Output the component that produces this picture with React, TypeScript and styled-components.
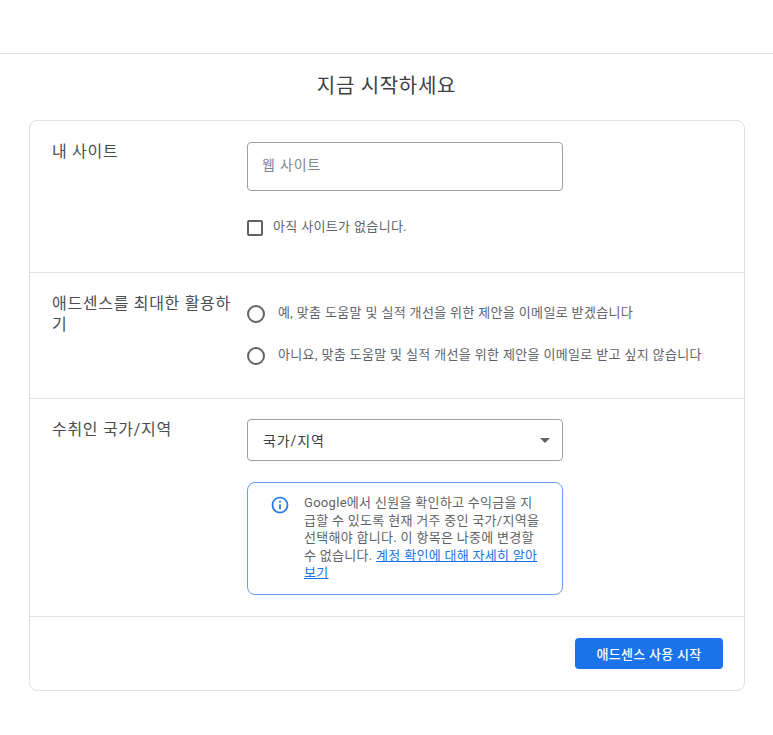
import styled, { createGlobalStyle } from "styled-components";

const GlobalStyle = createGlobalStyle`
  html, body {
    margin: 0;
    padding: 0;
    background: #fff;
  }
  body {
    font-family: Roboto, "Noto Sans CJK KR", sans-serif;
    color: #3c4043;
  }
`;

const App = () => {
  return (
    <>
      <GlobalStyle />
      <Header />
      <Title>지금 시작하세요</Title>
      <Card>
        <Section $height={152}>
          <Label>내 사이트</Label>
          <Fields>
            <TextInput>웹 사이트</TextInput>
            <CheckRow>
              <CheckBox />
              <SmallText>아직 사이트가 없습니다.</SmallText>
            </CheckRow>
          </Fields>
        </Section>
        <Section $height={126}>
          <Label>애드센스를 최대한 활용하기</Label>
          <RadioFields>
            <RadioRow>
              <Radio />
              <SmallText>예, 맞춤 도움말 및 실적 개선을 위한 제안을 이메일로 받겠습니다</SmallText>
            </RadioRow>
            <RadioRow>
              <Radio />
              <SmallText>아니요, 맞춤 도움말 및 실적 개선을 위한 제안을 이메일로 받고 싶지 않습니다</SmallText>
            </RadioRow>
          </RadioFields>
        </Section>
        <Section $height={218}>
          <Label>수취인 국가/지역</Label>
          <Fields>
            <SelectBox>
              <span>국가/지역</span>
              <Arrow />
            </SelectBox>
            <Notice>
              <InfoIcon viewBox="0 0 24 24" aria-hidden="true">
                <path
                  fill="#1a73e8"
                  d="M11 7h2v2h-2zm0 4h2v6h-2zm1-9C6.48 2 2 6.48 2 12s4.48 10 10 10 10-4.48 10-10S17.52 2 12 2zm0 18c-4.41 0-8-3.59-8-8s3.59-8 8-8 8 3.59 8 8-3.59 8-8 8z"
                />
              </InfoIcon>
              <NoticeText>
                Google에서 신원을 확인하고 수익금을 지급할 수 있도록 현재 거주 중인 국가/지역을 선택해야 합니다. 이 항목은 나중에 변경할 수 없습니다.{" "}
                <a href="#verify">계정 확인에 대해 자세히 알아보기</a>
              </NoticeText>
            </Notice>
          </Fields>
        </Section>
        <Footer>
          <StartButton>애드센스 사용 시작</StartButton>
        </Footer>
      </Card>
    </>
  );
};

const Header = styled.div`
  height: 53px;
  border-bottom: 1px solid #e0e0e0;
`;

const Title = styled.h1`
  margin: 0;
  height: 66px;
  line-height: 64px;
  text-align: center;
  font-size: 20px;
  font-weight: 400;
  letter-spacing: 0.7px;
  color: #3c4043;
`;

const Card = styled.div`
  width: 716px;
  box-sizing: border-box;
  margin-left: 29px;
  border: 1px solid #e0e0e0;
  border-radius: 8px;
`;

const Section = styled.div<{ $height: number }>`
  height: ${(p) => p.$height}px;
  box-sizing: border-box;
  display: grid;
  grid-template-columns: 195px 1fr;
  padding: 20px 22px 0;
  border-bottom: 1px solid #e0e0e0;
`;

const Label = styled.div`
  font-size: 16px;
  line-height: 21px;
  letter-spacing: 0.7px;
  color: #4a4e51;
  padding-right: 8px;
  word-break: break-all;
`;

const Fields = styled.div`
  display: flex;
  flex-direction: column;
  align-items: flex-start;
`;

const TextInput = styled.div`
  width: 316px;
  height: 49px;
  box-sizing: border-box;
  border: 1px solid #9aa0a6;
  border-radius: 4px;
  padding-left: 14px;
  margin-top: 1px;
  line-height: 45px;
  font-size: 14px;
  letter-spacing: 0.8px;
  color: #80868b;
`;

const CheckRow = styled.div`
  display: flex;
  align-items: center;
  gap: 10px;
  margin-top: 28px;
`;

const CheckBox = styled.div`
  width: 16px;
  height: 16px;
  box-sizing: border-box;
  border: 2px solid #5f6368;
  border-radius: 2px;
`;

const SmallText = styled.span`
  font-size: 13px;
  line-height: 18px;
  letter-spacing: 0.35px;
  color: #5f6368;
  white-space: nowrap;
  position: relative;
  top: -1px;
`;

const RadioFields = styled.div`
  display: flex;
  flex-direction: column;
  gap: 24px;
  padding-top: 12px;
`;

const RadioRow = styled.div`
  display: flex;
  align-items: center;
  gap: 13px;
`;

const Radio = styled.div`
  width: 18px;
  height: 18px;
  box-sizing: border-box;
  border: 2px solid #5f6368;
  border-radius: 50%;
`;

const SelectBox = styled.div`
  width: 316px;
  height: 42px;
  box-sizing: border-box;
  border: 1px solid #9aa0a6;
  border-radius: 4px;
  padding: 0 12px 0 15px;
  display: flex;
  align-items: center;
  justify-content: space-between;
  font-size: 14px;
  letter-spacing: 0.9px;
  color: #3c4043;
`;

const Arrow = styled.div`
  width: 0;
  height: 0;
  border-left: 5px solid transparent;
  border-right: 5px solid transparent;
  border-top: 5px solid #5f6368;
`;

const Notice = styled.div`
  width: 316px;
  box-sizing: border-box;
  margin-top: 21px;
  border: 1px solid #669df6;
  border-radius: 8px;
  padding: 11px 22px 12px 22px;
  display: flex;
  gap: 14px;
`;

const InfoIcon = styled.svg`
  width: 20px;
  height: 20px;
  flex: none;
  margin-top: 1px;
`;

const NoticeText = styled.div`
  font-size: 13px;
  line-height: 17.5px;
  letter-spacing: 0.3px;
  color: #5f6368;
  word-break: break-all;

  a {
    color: #1a73e8;
    text-decoration: underline;
  }
`;

const Footer = styled.div`
  height: 73px;
  box-sizing: border-box;
  padding: 21px 21px 0 0;
  display: flex;
  justify-content: flex-end;
  align-items: flex-start;
`;

const StartButton = styled.button`
  width: 148px;
  height: 31px;
  border: none;
  border-radius: 4px;
  background: #1a73e8;
  color: #fff;
  font-family: Roboto, "Noto Sans CJK KR", sans-serif;
  font-size: 13px;
  letter-spacing: 0.3px;
  font-weight: 500;
  padding: 0;
`;

export default App;
